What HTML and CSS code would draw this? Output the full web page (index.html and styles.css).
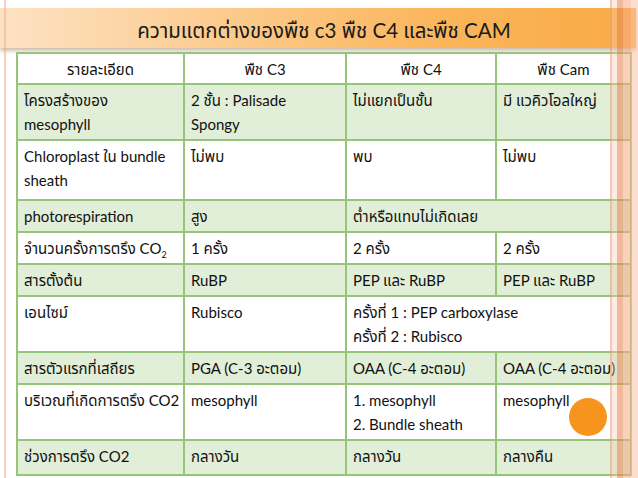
FILE: index.html
```html
<!DOCTYPE html>
<html lang="th">
<head>
<meta charset="utf-8">
<title>ความแตกต่างของพืช C3 พืช C4 และพืช CAM</title>
<link rel="stylesheet" href="styles.css">
</head>
<body>
<div class="slide">
  <div class="banner"><h1 class="title">ความแตกต่างของพืช c3 พืช C4 และพืช CAM</h1></div>
  <table class="grid">
    <colgroup>
      <col class="c1"><col class="c2"><col class="c3"><col class="c4">
    </colgroup>
    <thead>
      <tr><th>รายละเอียด</th><th>พืช C3</th><th>พืช C4</th><th>พืช Cam</th></tr>
    </thead>
    <tbody>
      <tr class="g"><td>โครงสร้างของ<br>mesophyll</td><td>2 ชั้น : Palisade<br>Spongy</td><td>ไม่แยกเป็นชั้น</td><td>มี แวคิวโอลใหญ่</td></tr>
      <tr class="h58"><td>Chloroplast ใน bundle<br>sheath</td><td>ไม่พบ</td><td>พบ</td><td>ไม่พบ</td></tr>
      <tr class="g"><td>photorespiration</td><td>สูง</td><td colspan="2">ต่ำหรือแทบไม่เกิดเลย</td></tr>
      <tr><td>จำนวนครั้งการตรึง CO<sub>2</sub></td><td>1 ครั้ง</td><td>2 ครั้ง</td><td>2 ครั้ง</td></tr>
      <tr class="g"><td>สารตั้งต้น</td><td>RuBP</td><td>PEP และ RuBP</td><td>PEP และ RuBP</td></tr>
      <tr><td>เอนไซม์</td><td>Rubisco</td><td colspan="2">ครั้งที่ 1 : PEP carboxylase<br>ครั้งที่ 2 : Rubisco</td></tr>
      <tr class="g"><td>สารตัวแรกที่เสถียร</td><td>PGA (C-3 อะตอม)</td><td>OAA (C-4 อะตอม)</td><td>OAA (C-4 อะตอม)</td></tr>
      <tr><td>บริเวณที่เกิดการตรึง CO2</td><td>mesophyll</td><td>1. mesophyll<br>2. Bundle sheath</td><td>mesophyll</td></tr>
      <tr class="g h34"><td>ช่วงการตรึง CO2</td><td>กลางวัน</td><td>กลางวัน</td><td>กลางคืน</td></tr>
    </tbody>
  </table>
  <div class="frame-left"></div>
  <div class="frame-right">
    <span class="s1"></span><span class="s2"></span><span class="s3"></span><span class="s4"></span><span class="s5"></span>
  </div>
  <div class="dot"></div>
</div>
</body>
</html>
```
FILE: styles.css
```css
html, body {
  margin: 0;
  padding: 0;
  background: #ffffff;
}
.slide {
  position: relative;
  width: 638px;
  height: 478px;
  overflow: hidden;
  padding-top: 8px;
  box-sizing: border-box;
  font-family: Lato, "Noto Sans Thai", "Noto Sans", sans-serif;
  color: #111111;
}
.banner {
  height: 40px;
  margin-right: 2px;
  background: linear-gradient(to right, #fde2c4 0%, #fccb8e 35%, #fab55a 70%, #f9ab46 100%);
  box-shadow: 0 3px 4px rgba(120, 70, 20, 0.35);
  display: flex;
  align-items: center;
  justify-content: center;
}
.title {
  margin: 0;
  font-size: 20.5px;
  font-weight: normal;
  color: #1a1a1a;
  padding-top: 6px;
  padding-left: 12px;
}
.grid {
  margin: 4px 0 0 16px;
  width: 614px;
  border-collapse: collapse;
  table-layout: fixed;
  font-size: 15px;
}
.c1 { width: 167px; }
.c2 { width: 162px; }
.c3 { width: 150px; }
.c4 { width: 135px; }
.grid th, .grid td {
  border: 2px solid #96c57a;
  padding: 3px 6px;
  line-height: 24px;
  vertical-align: top;
  text-align: left;
  white-space: nowrap;
  overflow: hidden;
}
.grid th {
  text-align: center;
  font-weight: normal;
  padding: 3px 6px 2px;
}
.grid tr.g td {
  background: #e1eed8;
}
.grid tr.h58 td { height: 52px; }
.grid tr.h34 td { height: 27px; }
.grid sub {
  font-size: 9px;
  line-height: 0;
}
.frame-left {
  position: absolute;
  left: 4px;
  top: 0;
  bottom: 0;
  width: 2px;
  background: rgba(242, 165, 130, 0.5);
}
.frame-right {
  position: absolute;
  left: 610px;
  right: 0;
  top: 0;
  bottom: 0;
  display: flex;
  pointer-events: none;
}
.frame-right span { display: block; height: 100%; }
.s1 { width: 2px; background: rgba(240, 155, 120, 0.55); }
.s2 { width: 5px; background: rgba(250, 200, 175, 0.35); }
.s3 { width: 6px; background: rgba(228, 140, 90, 0.6); }
.s4 { width: 8px; background: rgba(245, 170, 135, 0.55); }
.s5 { flex: 1; background: rgba(250, 195, 170, 0.55); }
.dot {
  position: absolute;
  left: 569px;
  top: 398px;
  width: 38px;
  height: 38px;
  border-radius: 50%;
  background: #f7941d;
}
```
